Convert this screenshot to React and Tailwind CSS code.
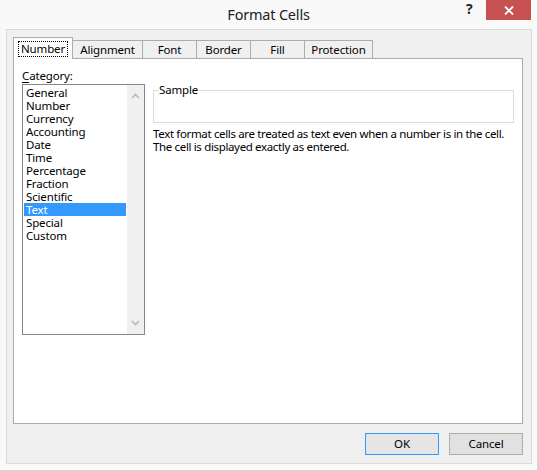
import React from 'react';

const categories = [
  'General',
  'Number',
  'Currency',
  'Accounting',
  'Date',
  'Time',
  'Percentage',
  'Fraction',
  'Scientific',
  'Text',
  'Special',
  'Custom',
];

const tabs = [
  { label: 'Number', w: 'w-[60px]' },
  { label: 'Alignment', w: 'w-[70px]' },
  { label: 'Font', w: 'w-[54px]' },
  { label: 'Border', w: 'w-[54px]' },
  { label: 'Fill', w: 'w-[54px]' },
  { label: 'Protection', w: 'w-[68px]' },
];

const Chevron = ({ up }) => (
  <svg width="9" height="6" viewBox="0 0 9 6" className="block">
    <polyline
      points={up ? '1,5 4.5,1.5 8,5' : '1,1 4.5,4.5 8,1'}
      fill="none"
      stroke="#b8b8b8"
      strokeWidth="1.6"
    />
  </svg>
);

const App = () => {
  return (
    <div
      className="w-[538px] h-[471px] bg-[#f9f9f9] text-[11.5px] tracking-[-0.15px] text-black overflow-hidden"
      style={{ fontFamily: '"Noto Sans", "Open Sans", sans-serif' }}
    >
      <div className="w-[538px] h-[471px] border-r border-b border-[#d4d4d4] flex flex-col">
        {/* title bar */}
        <div className="h-[29px] relative flex justify-center items-start">
          <span className="mt-[4px] text-[14.5px] tracking-[-0.2px] text-[#222] leading-[20px]">Format Cells</span>
          <span className="absolute left-[466px] top-[0px] text-[14px] font-bold text-[#222] leading-[18px]">?</span>
          <div className="absolute left-[486px] top-0 w-[45px] h-[20px] bg-[#c75050] flex items-center justify-center">
            <svg width="10" height="9" viewBox="0 0 10 9">
              <path d="M1 0.5 L9 8.5 M9 0.5 L1 8.5" stroke="#fff" strokeWidth="1.8" />
            </svg>
          </div>
        </div>

        {/* client area */}
        <div className="ml-[6px] w-[526px] h-[435px] border border-[#dadada] bg-[#f0f0f0] pl-[6px] pr-[8px] pt-[7px] flex flex-col">
          {/* tabs */}
          <div className="flex items-end h-[21px] relative z-10">
            {tabs.map((t, i) =>
              i === 0 ? (
                <div
                  key={t.label}
                  className={`${t.w} h-[22px] -mb-[1px] bg-white border border-b-0 border-[#acacac] flex items-center justify-center`}
                >
                  <span className="border border-dotted border-black px-[2px] leading-[14px]">{t.label}</span>
                </div>
              ) : (
                <div
                  key={t.label}
                  className={`${t.w} h-[18px] bg-[#f0f0f0] border border-b-0 border-l-0 border-[#acacac] flex items-center justify-center leading-[14px]`}
                >
                  {t.label}
                </div>
              )
            )}
          </div>

          {/* panel */}
          <div className="w-[510px] h-[366px] bg-white border border-[#acacac] flex pt-[8px] pl-[8px] gap-[8px]">
            <div className="flex flex-col">
              <div className="h-[17px] leading-[17px]">
                <span className="underline underline-offset-2">C</span>ategory:
              </div>
              <div className="w-[123px] h-[251px] border border-[#828790] flex">
                <div className="flex-1 flex flex-col pt-[1px] px-[1px]">
                  {categories.map((c) => (
                    <div
                      key={c}
                      className={`h-[13px] leading-[13px] pl-[2px] ${c === 'Text' ? 'bg-[#3399ff] text-white' : ''}`}
                    >
                      {c}
                    </div>
                  ))}
                </div>
                <div className="w-[17px] bg-[#f0f0f0] flex flex-col items-center justify-between pt-[8px] pb-[8px]">
                  <Chevron up />
                  <Chevron />
                </div>
              </div>
            </div>

            <div className="flex flex-col pt-[23px]">
              <div className="relative w-[361px] h-[33px] border border-[#dcdcdc]">
                <span className="absolute left-[5px] -top-[8px] bg-white pr-[1px] leading-[14px]">Sample</span>
              </div>
              <div className="mt-[4px] leading-[13px] tracking-[-0.35px] whitespace-nowrap">
                <div>Text format cells are treated as text even when a number is in the cell.</div>
                <div>The cell is displayed exactly as entered.</div>
              </div>
            </div>
          </div>

          {/* buttons */}
          <div className="flex justify-end gap-[10px] mt-[9px]">
            <button className="w-[74px] h-[22px] bg-[#e5e5e5] border border-[#3399ff] leading-[14px]">OK</button>
            <button className="w-[74px] h-[22px] bg-[#e1e1e1] border border-[#adadad] leading-[14px]">Cancel</button>
          </div>
        </div>
      </div>
    </div>
  );
};

export default App;
